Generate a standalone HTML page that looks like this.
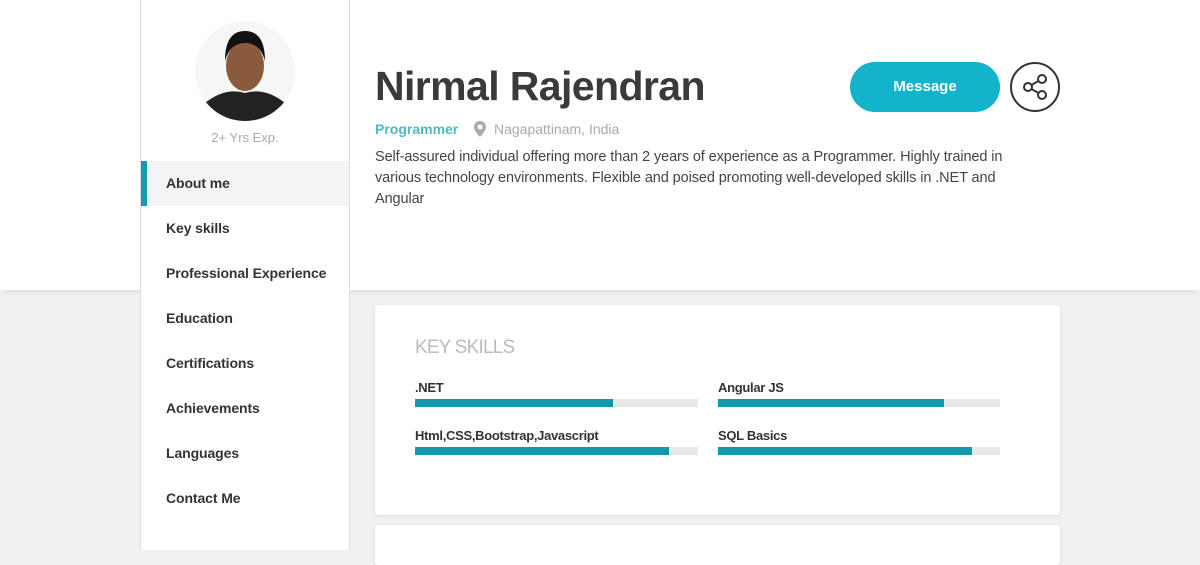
<!DOCTYPE html>
<html><head><style>
*{margin:0;padding:0;box-sizing:border-box}
body{width:1200px;height:550px;overflow:hidden;background:#f1f1f1;font-family:"Liberation Sans",sans-serif;position:relative}
.top{position:absolute;left:0;top:0;width:1200px;height:290px;background:#fff;box-shadow:0 2px 6px rgba(0,0,0,.08)}
.side{position:absolute;left:140px;top:0;width:210px;height:550px;background:#fff;border-left:1px solid #ddd;border-right:1px solid #ddd}
.av{position:absolute;left:54px;top:21px;width:100px;height:100px;border-radius:50%;background:#f4f4f4;overflow:hidden}
.exp{position:absolute;left:0;width:208px;top:130px;text-align:center;font-size:13px;color:#aaa}
.nav{position:absolute;left:0;width:208px;height:45px;font-size:14px;font-weight:bold;color:#333;padding-left:25px;line-height:45px;letter-spacing:-.1px;white-space:nowrap}
.nav.a{background:#f3f4f6;border-left:6px solid #159aac;padding-left:19px}
h1{position:absolute;left:375px;top:63px;font-size:41px;color:#3a3a3a;font-weight:bold;letter-spacing:-.6px}
.role{position:absolute;left:375px;top:121px;font-size:14px;color:#4fb8c6;font-weight:bold}
.loc{position:absolute;left:494px;top:121px;font-size:14px;color:#aaa}
.desc{position:absolute;left:375px;top:147px;width:655px;font-size:14.5px;line-height:21px;color:#444;letter-spacing:-.1px}
.btn{position:absolute;left:850px;top:62px;width:150px;height:50px;border-radius:25px;background:#13b3cb;color:#fff;font-weight:bold;font-size:15px;text-align:center;line-height:50px}
.sh{position:absolute;left:1010px;top:62px;width:50px;height:50px;border-radius:50%;border:2px solid #333}
.card{position:absolute;left:375px;width:685px;background:#fff;border-radius:4px;box-shadow:0 1px 4px rgba(0,0,0,.08)}
.ks{position:absolute;left:415px;top:337px;font-size:19px;color:#bbb;letter-spacing:-.8px}
.lb{position:absolute;font-size:13px;font-weight:bold;color:#333;letter-spacing:-.3px}
.bar{position:absolute;height:8px;background:#e8e8e8}
.bar i{display:block;height:8px;background:#1199ab}
</style></head><body>
<div class="top"></div>
<div class="side">
<div class="av"><svg width="100" height="100"><rect x="0" y="0" width="100" height="100" fill="#f6f6f6"/><path d="M0 100 L10 82 Q30 66 50 72 Q70 66 90 82 L100 100Z" fill="#222"/><ellipse cx="50" cy="45" rx="19" ry="25" fill="#8a5a3c"/><path d="M30 40 Q30 10 50 10 Q70 10 70 40 Q65 22 50 22 Q35 22 30 40Z" fill="#111"/></svg></div>
<div class="exp">2+ Yrs Exp.</div>
<div class="nav a" style="top:161px">About me</div>
<div class="nav" style="top:206px">Key skills</div>
<div class="nav" style="top:251px">Professional Experience</div>
<div class="nav" style="top:296px">Education</div>
<div class="nav" style="top:341px">Certifications</div>
<div class="nav" style="top:386px">Achievements</div>
<div class="nav" style="top:431px">Languages</div>
<div class="nav" style="top:476px">Contact Me</div>
</div>
<h1>Nirmal Rajendran</h1>
<div class="role">Programmer</div>
<svg style="position:absolute;left:474px;top:121px" width="12" height="16" viewBox="0 0 12 16"><path d="M6 0a6 6 0 0 0-6 6c0 4 6 10 6 10s6-6 6-10a6 6 0 0 0-6-6zm0 8.5a2.5 2.5 0 1 1 0-5 2.5 2.5 0 0 1 0 5z" fill="#aaa"/></svg>
<div class="loc">Nagapattinam, India</div>
<div class="desc">Self-assured individual offering more than 2 years of experience as a Programmer. Highly trained in<br>various technology environments. Flexible and poised promoting well-developed skills in .NET and<br>Angular</div>
<div class="btn">Message</div>
<div class="sh"><svg width="46" height="46" viewBox="0 0 46 46"><g fill="none" stroke="#333" stroke-width="2"><circle cx="30" cy="15" r="4"/><circle cx="16" cy="23" r="4"/><circle cx="30" cy="31" r="4"/><path d="M19.5 21l7-4M19.5 25l7 4"/></g></svg></div>
<div class="card" style="top:305px;height:210px"></div>
<div class="card" style="top:525px;height:40px"></div>
<div class="ks">KEY SKILLS</div>
<div class="lb" style="left:415px;top:380px">.NET</div>
<div class="bar" style="left:415px;top:399px;width:283px"><i style="width:198px"></i></div>
<div class="lb" style="left:718px;top:380px">Angular JS</div>
<div class="bar" style="left:718px;top:399px;width:282px"><i style="width:226px"></i></div>
<div class="lb" style="left:415px;top:428px">Html,CSS,Bootstrap,Javascript</div>
<div class="bar" style="left:415px;top:447px;width:283px"><i style="width:254px"></i></div>
<div class="lb" style="left:718px;top:428px">SQL Basics</div>
<div class="bar" style="left:718px;top:447px;width:282px"><i style="width:254px"></i></div>
</body></html>
